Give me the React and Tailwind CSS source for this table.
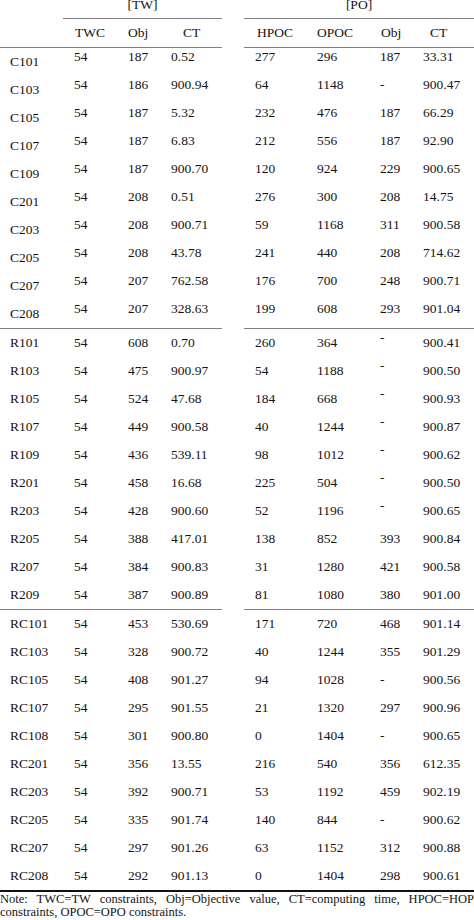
import React from 'react';

const C_ROWS = [
  ['C101', '54', '187', '0.52', '277', '296', '187', '33.31'],
  ['C103', '54', '186', '900.94', '64', '1148', '-', '900.47'],
  ['C105', '54', '187', '5.32', '232', '476', '187', '66.29'],
  ['C107', '54', '187', '6.83', '212', '556', '187', '92.90'],
  ['C109', '54', '187', '900.70', '120', '924', '229', '900.65'],
  ['C201', '54', '208', '0.51', '276', '300', '208', '14.75'],
  ['C203', '54', '208', '900.71', '59', '1168', '311', '900.58'],
  ['C205', '54', '208', '43.78', '241', '440', '208', '714.62'],
  ['C207', '54', '207', '762.58', '176', '700', '248', '900.71'],
  ['C208', '54', '207', '328.63', '199', '608', '293', '901.04'],
];

// '^' = raised dash
const R_ROWS = [
  ['R101', '54', '608', '0.70', '260', '364', '^', '900.41'],
  ['R103', '54', '475', '900.97', '54', '1188', '^', '900.50'],
  ['R105', '54', '524', '47.68', '184', '668', '^', '900.93'],
  ['R107', '54', '449', '900.58', '40', '1244', '^', '900.87'],
  ['R109', '54', '436', '539.11', '98', '1012', '^', '900.62'],
  ['R201', '54', '458', '16.68', '225', '504', '^', '900.50'],
  ['R203', '54', '428', '900.60', '52', '1196', '^', '900.65'],
  ['R205', '54', '388', '417.01', '138', '852', '393', '900.84'],
  ['R207', '54', '384', '900.83', '31', '1280', '421', '900.58'],
  ['R209', '54', '387', '900.89', '81', '1080', '380', '901.00'],
];

const RC_ROWS = [
  ['RC101', '54', '453', '530.69', '171', '720', '468', '901.14'],
  ['RC103', '54', '328', '900.72', '40', '1244', '355', '901.29'],
  ['RC105', '54', '408', '901.27', '94', '1028', '-', '900.56'],
  ['RC107', '54', '295', '901.55', '21', '1320', '297', '900.96'],
  ['RC108', '54', '301', '900.80', '0', '1404', '-', '900.65'],
  ['RC201', '54', '356', '13.55', '216', '540', '356', '612.35'],
  ['RC203', '54', '392', '900.71', '53', '1192', '459', '902.19'],
  ['RC205', '54', '335', '901.74', '140', '844', '-', '900.62'],
  ['RC207', '54', '297', '901.26', '63', '1152', '312', '900.88'],
  ['RC208', '54', '292', '901.13', '0', '1404', '298', '900.61'],
];

const COLS = 'grid grid-cols-[74px_54px_43px_84px_62px_63px_43px_51px]';

function Divider() {
  return (
    <div className="flex h-px">
      <div className="w-[222px] bg-[#808080]" />
      <div className="ml-[22px] flex-1 bg-[#808080]" />
    </div>
  );
}

function Row({ row, raised }) {
  return (
    <div className={`${COLS} h-[28px]`}>
      {row.map((v, i) => {
        const up = (raised && i > 0) || v === '^';
        return (
          <div key={i} className={`flex items-center h-[28px] ${i === 0 ? 'pl-[10px]' : ''} ${up ? 'pb-[10px]' : ''}`}>
            {v === '^' ? '-' : v}
          </div>
        );
      })}
    </div>
  );
}

export default function App() {
  return (
    <div className="w-[474px] h-[920px] overflow-hidden bg-white text-[#141414] font-['Liberation_Serif',serif] text-[13.5px]">
      <div className="flex h-[18px] leading-[10px]">
        <div className="w-[222px] pl-[63px]">
          <div className="text-center">[TW]</div>
        </div>
        <div className="ml-[22px] flex-1 text-center">[PO]</div>
      </div>
      <div className="flex h-px">
        <div className="ml-[63px] w-[159px] bg-[#808080]" />
        <div className="ml-[22px] flex-1 bg-[#808080]" />
      </div>
      <div className={`${COLS} h-[28px] items-center`}>
        <div />
        <div className="pl-[1px]">TWC</div>
        <div>Obj</div>
        <div className="pl-[12px]">CT</div>
        <div className="pl-[2px]">HPOC</div>
        <div>OPOC</div>
        <div className="pl-[1px]">Obj</div>
        <div className="pl-[7px]">CT</div>
      </div>
      <Divider />
      {C_ROWS.map((r) => <Row key={r[0]} row={r} raised />)}
      <Divider />
      {R_ROWS.map((r) => <Row key={r[0]} row={r} />)}
      <Divider />
      {RC_ROWS.map((r) => <Row key={r[0]} row={r} />)}
      <div className="h-[2px] bg-[#111]" />
      <div className="text-[12.5px] leading-[13px] pt-px">
        <div className="text-justify [text-align-last:justify]">Note: TWC=TW constraints, Obj=Objective value, CT=computing time, HPOC=HOP</div>
        <div>constraints, OPOC=OPO constraints.</div>
      </div>
    </div>
  );
}
